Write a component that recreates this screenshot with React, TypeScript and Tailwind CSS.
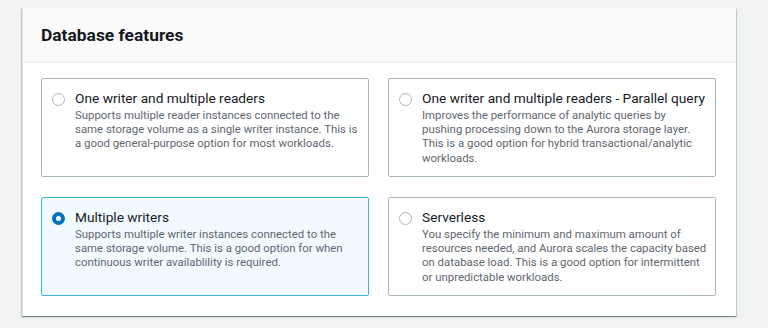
const options = [
  {
    title: 'One writer and multiple readers',
    desc: 'Supports multiple reader instances connected to the same storage volume as a single writer instance. This is a good general-purpose option for most workloads.',
  },
  {
    title: 'One writer and multiple readers - Parallel query',
    desc: 'Improves the performance of analytic queries by pushing processing down to the Aurora storage layer. This is a good option for hybrid transactional/analytic workloads.',
  },
  {
    title: 'Multiple writers',
    desc: 'Supports multiple writer instances connected to the same storage volume. This is a good option for when continuous writer availablility is required.',
    selected: true,
  },
  {
    title: 'Serverless',
    desc: 'You specify the minimum and maximum amount of resources needed, and Aurora scales the capacity based on database load. This is a good option for intermittent or unpredictable workloads.',
  },
];

function Radio({ checked }: { checked?: boolean }) {
  if (checked) {
    return <span className="mt-[5px] shrink-0 w-[13px] h-[13px] rounded-full border-[4px] border-[#0073bb] bg-white" />;
  }
  return <span className="mt-[5px] shrink-0 w-[13px] h-[13px] rounded-full border-[1.5px] border-[#aab7b8] bg-white" />;
}

export default function App() {
  return (
    <div className="w-[768px] h-[328px] bg-[#f2f3f3] pt-[8px] pl-[22px] font-['Roboto',sans-serif]">
      <div className="w-[714px] h-[308px] bg-white border-l border-[#dfe3e3] shadow-[0_1px_1px_rgba(0,28,36,0.3),1px_1px_1px_rgba(0,28,36,0.15),-1px_1px_1px_rgba(0,28,36,0.15)]">
        <div className="h-[55px] bg-[#fafafa] border-b border-[#eaeded] pl-[18px] pr-[19px] flex items-center">
          <h2 className="text-[17.4px] font-bold text-[#16191f]">Database features</h2>
        </div>
        <div className="pl-[18px] pr-[19px] pt-[15px] grid grid-cols-[328px_328px] gap-x-[19px] gap-y-[20px]">
          {options.map((o) => (
            <div
              key={o.title}
              className={
                o.selected
                  ? 'h-[99px] rounded-[2px] border border-[#3db5dd] bg-[#f1faff] pl-[10px] pr-[6px] pt-[8.5px] flex gap-[10px]'
                  : 'h-[99px] rounded-[2px] border border-[#aab7b8] bg-white pl-[10px] pr-[6px] pt-[8.5px] flex gap-[10px]'
              }
            >
              <Radio checked={o.selected} />
              <div>
                <div className="text-[13.7px] leading-[20px] text-[#16191f]">{o.title}</div>
                <div className="text-[11.4px] leading-[14.4px] text-[#5f6670]">{o.desc}</div>
              </div>
            </div>
          ))}
        </div>
      </div>
    </div>
  );
}
